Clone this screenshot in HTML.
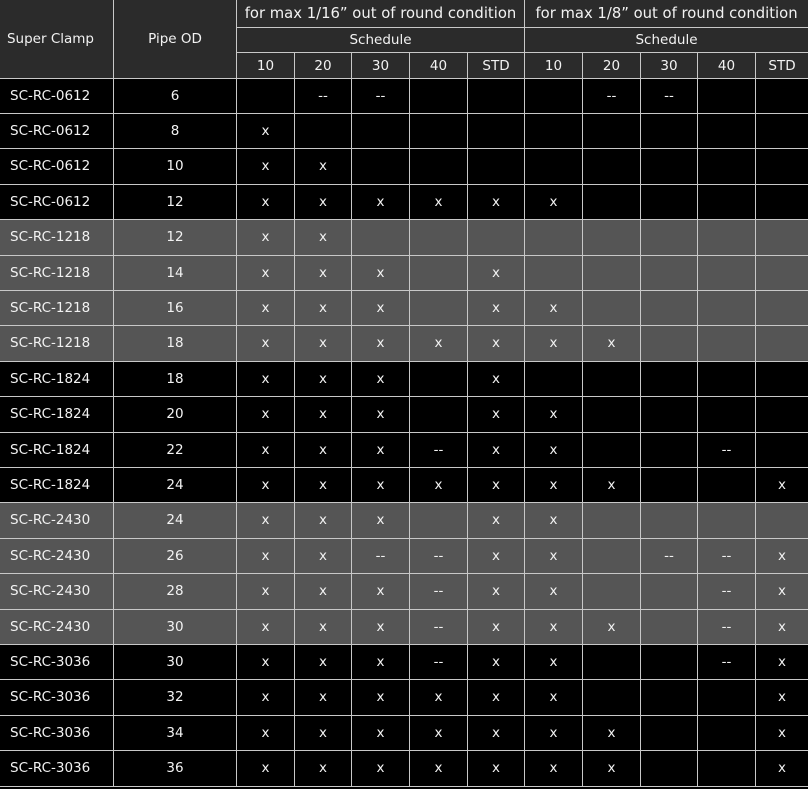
<!DOCTYPE html>
<html><head><meta charset="utf-8"><style>
html,body{margin:0;padding:0;background:#000;width:808px;height:789px;overflow:hidden}
table{border-collapse:collapse;table-layout:fixed;width:809px;font-family:"DejaVu Sans","Liberation Sans",sans-serif;font-size:13.5px;color:#f2f2f2;position:absolute;left:-1px;top:-1px}
td,th{border:1px solid #c8c8c8;padding:0;text-align:center;font-weight:normal;overflow:hidden;white-space:nowrap}
thead th{background:#2b2b2b}
th.big{font-size:14.8px}
th.sc{padding-right:12px}
tbody td{vertical-align:top;padding-top:8px;line-height:18px}
tbody td:first-child{text-align:left;padding-left:10px}
tr.g td{background:#555}
tr.b td{background:#000}
</style></head><body>
<table>
<colgroup><col style="width:114px"><col style="width:123px"><col style="width:58px"><col style="width:57px"><col style="width:58px"><col style="width:58px"><col style="width:57px"><col style="width:58px"><col style="width:58px"><col style="width:57px"><col style="width:58px"><col style="width:53px"></colgroup>
<thead>
<tr style="height:28px"><th rowspan="3" class="sc">Super Clamp</th><th rowspan="3">Pipe OD</th><th colspan="5" class="big">for max 1/16” out of round condition</th><th colspan="5" class="big">for max 1/8” out of round condition</th></tr>
<tr style="height:25px"><th colspan="5">Schedule</th><th colspan="5">Schedule</th></tr>
<tr style="height:26px"><th>10</th><th>20</th><th>30</th><th>40</th><th>STD</th><th>10</th><th>20</th><th>30</th><th>40</th><th>STD</th></tr>
</thead>
<tbody>
<tr class="b" style="height:35px"><td>SC-RC-0612</td><td>6</td><td></td><td>--</td><td>--</td><td></td><td></td><td></td><td>--</td><td>--</td><td></td><td></td></tr>
<tr class="b" style="height:35px"><td>SC-RC-0612</td><td>8</td><td>x</td><td></td><td></td><td></td><td></td><td></td><td></td><td></td><td></td><td></td></tr>
<tr class="b" style="height:36px"><td>SC-RC-0612</td><td>10</td><td>x</td><td>x</td><td></td><td></td><td></td><td></td><td></td><td></td><td></td><td></td></tr>
<tr class="b" style="height:35px"><td>SC-RC-0612</td><td>12</td><td>x</td><td>x</td><td>x</td><td>x</td><td>x</td><td>x</td><td></td><td></td><td></td><td></td></tr>
<tr class="g" style="height:36px"><td>SC-RC-1218</td><td>12</td><td>x</td><td>x</td><td></td><td></td><td></td><td></td><td></td><td></td><td></td><td></td></tr>
<tr class="g" style="height:35px"><td>SC-RC-1218</td><td>14</td><td>x</td><td>x</td><td>x</td><td></td><td>x</td><td></td><td></td><td></td><td></td><td></td></tr>
<tr class="g" style="height:35px"><td>SC-RC-1218</td><td>16</td><td>x</td><td>x</td><td>x</td><td></td><td>x</td><td>x</td><td></td><td></td><td></td><td></td></tr>
<tr class="g" style="height:36px"><td>SC-RC-1218</td><td>18</td><td>x</td><td>x</td><td>x</td><td>x</td><td>x</td><td>x</td><td>x</td><td></td><td></td><td></td></tr>
<tr class="b" style="height:35px"><td>SC-RC-1824</td><td>18</td><td>x</td><td>x</td><td>x</td><td></td><td>x</td><td></td><td></td><td></td><td></td><td></td></tr>
<tr class="b" style="height:36px"><td>SC-RC-1824</td><td>20</td><td>x</td><td>x</td><td>x</td><td></td><td>x</td><td>x</td><td></td><td></td><td></td><td></td></tr>
<tr class="b" style="height:35px"><td>SC-RC-1824</td><td>22</td><td>x</td><td>x</td><td>x</td><td>--</td><td>x</td><td>x</td><td></td><td></td><td>--</td><td></td></tr>
<tr class="b" style="height:35px"><td>SC-RC-1824</td><td>24</td><td>x</td><td>x</td><td>x</td><td>x</td><td>x</td><td>x</td><td>x</td><td></td><td></td><td>x</td></tr>
<tr class="g" style="height:36px"><td>SC-RC-2430</td><td>24</td><td>x</td><td>x</td><td>x</td><td></td><td>x</td><td>x</td><td></td><td></td><td></td><td></td></tr>
<tr class="g" style="height:35px"><td>SC-RC-2430</td><td>26</td><td>x</td><td>x</td><td>--</td><td>--</td><td>x</td><td>x</td><td></td><td>--</td><td>--</td><td>x</td></tr>
<tr class="g" style="height:36px"><td>SC-RC-2430</td><td>28</td><td>x</td><td>x</td><td>x</td><td>--</td><td>x</td><td>x</td><td></td><td></td><td>--</td><td>x</td></tr>
<tr class="g" style="height:35px"><td>SC-RC-2430</td><td>30</td><td>x</td><td>x</td><td>x</td><td>--</td><td>x</td><td>x</td><td>x</td><td></td><td>--</td><td>x</td></tr>
<tr class="b" style="height:35px"><td>SC-RC-3036</td><td>30</td><td>x</td><td>x</td><td>x</td><td>--</td><td>x</td><td>x</td><td></td><td></td><td>--</td><td>x</td></tr>
<tr class="b" style="height:36px"><td>SC-RC-3036</td><td>32</td><td>x</td><td>x</td><td>x</td><td>x</td><td>x</td><td>x</td><td></td><td></td><td></td><td>x</td></tr>
<tr class="b" style="height:35px"><td>SC-RC-3036</td><td>34</td><td>x</td><td>x</td><td>x</td><td>x</td><td>x</td><td>x</td><td>x</td><td></td><td></td><td>x</td></tr>
<tr class="b" style="height:36px"><td>SC-RC-3036</td><td>36</td><td>x</td><td>x</td><td>x</td><td>x</td><td>x</td><td>x</td><td>x</td><td></td><td></td><td>x</td></tr>
</tbody>
</table>
</body></html>
